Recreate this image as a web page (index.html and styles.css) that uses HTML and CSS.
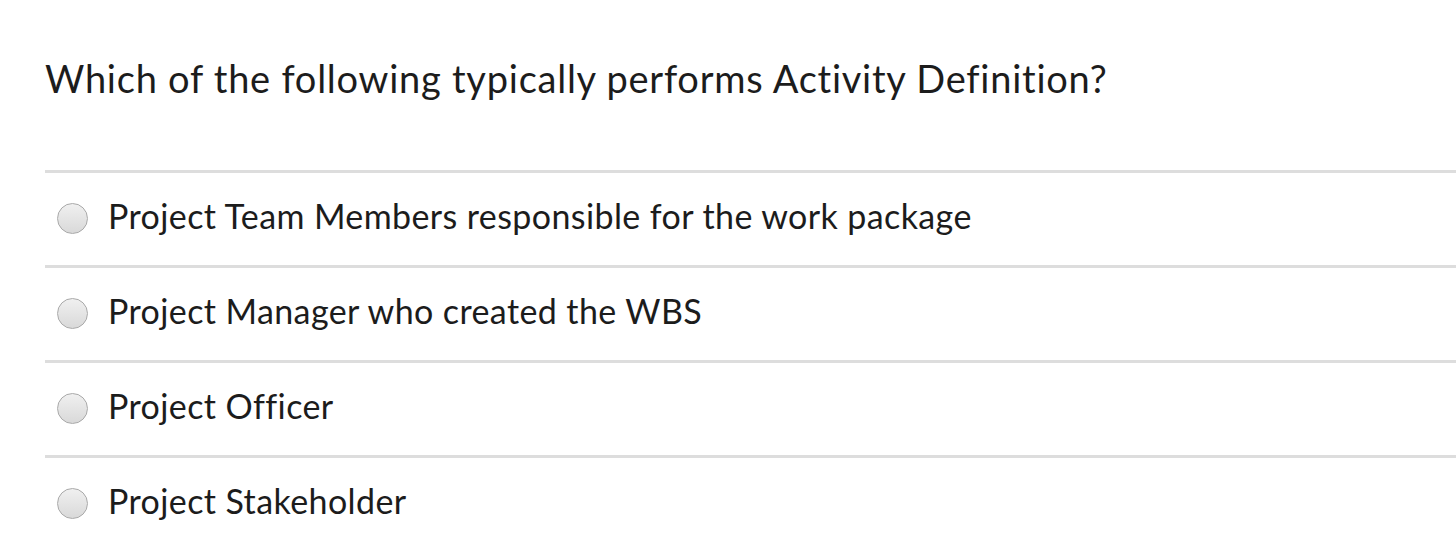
FILE: index.html
```html
<!DOCTYPE html>
<html>
<head>
<meta charset="utf-8">
<link rel="stylesheet" href="styles.css">
</head>
<body>
<div class="quiz">
  <h1 class="question">Which of the following typically performs Activity Definition?</h1>
  <ul class="options">
    <li class="option"><span class="radio"></span><span class="label">Project Team Members responsible for the work package</span></li>
    <li class="option"><span class="radio"></span><span class="label">Project Manager who created the WBS</span></li>
    <li class="option"><span class="radio"></span><span class="label">Project Officer</span></li>
    <li class="option"><span class="radio"></span><span class="label">Project Stakeholder</span></li>
  </ul>
</div>
</body>
</html>
```
FILE: styles.css
```css
html, body {
  margin: 0;
  padding: 0;
  background: #fff;
}
body {
  font-family: Lato, "Open Sans", sans-serif;
  color: #1c1c1c;
  overflow: hidden;
}
.quiz {
  padding-left: 45px;
}
.question {
  margin: 56px 0 70px 0;
  font-size: 38px;
  line-height: 44px;
  font-weight: 400;
  letter-spacing: 0.75px;
}
.options {
  list-style: none;
  margin: 0;
  padding: 0;
}
.option {
  display: flex;
  align-items: flex-start;
  border-top: 3px solid #dddddd;
  padding: 23px 0 29px 12px;
}
.radio {
  flex: none;
  width: 29px;
  height: 29px;
  margin-top: 7px;
  margin-right: 20px;
  border: 1px solid #a9a9a9;
  border-radius: 50%;
  background: linear-gradient(#f0f0f0, #d9d9d9);
}
.label {
  font-size: 34px;
  line-height: 40px;
  letter-spacing: 0.4px;
}
```
